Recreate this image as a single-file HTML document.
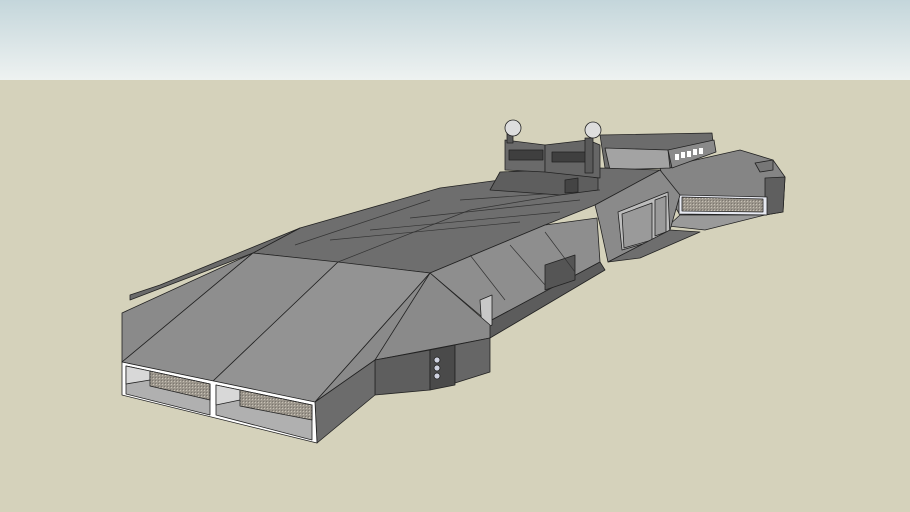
<!DOCTYPE html>
<html><head><meta charset="utf-8"><style>
html,body{margin:0;padding:0;width:910px;height:512px;overflow:hidden;background:#d5d2bb}
svg{display:block}
</style></head><body>
<svg width="910" height="512" viewBox="0 0 910 512" xmlns="http://www.w3.org/2000/svg">
<defs>
<linearGradient id="sky" x1="0" y1="0" x2="0" y2="1">
<stop offset="0" stop-color="#c4d6db"/><stop offset="1" stop-color="#eef2f1"/>
</linearGradient>
<pattern id="mesh" width="3" height="3" patternUnits="userSpaceOnUse">
<rect width="3" height="3" fill="#9c968c"/><rect width="1" height="1" fill="#c8c2b6"/><rect x="2" y="2" width="1" height="1" fill="#7c776f"/>
</pattern>
</defs>
<rect x="0" y="0" width="910" height="80" fill="url(#sky)"/>
<rect x="0" y="80" width="910" height="432" fill="#d5d2bb"/>
<g stroke="#222" stroke-width="0.8" stroke-linejoin="round">
<!-- rear wing -->
<polygon points="660,168 740,150 773,160 785,177 783,212 765,215 680,215 668,195" fill="#858585"/>
<polygon points="755,163 773,160 773,170 760,172" fill="#777"/>
<polygon points="765,178 785,177 783,212 765,215" fill="#5f5f5f"/>
<polygon points="679,195 767,197 767,215 679,214" fill="#e8eaf2"/>
<polygon points="682,197 763,199 763,212 682,211" fill="url(#mesh)"/>
<polygon points="680,215 765,215 705,230 668,226" fill="#9a9a9a"/>
<!-- rear deck -->
<polygon points="600,135 712,133 714,152 670,168 605,168" fill="#6c6c6c"/>
<polygon points="605,148 668,150 670,168 610,170" fill="#a3a3a3"/>
<polygon points="668,150 714,140 716,152 672,168" fill="#8a8a8a"/>
<g fill="#fff" stroke="none"><rect x="675" y="154" width="4" height="6"/><rect x="681" y="152" width="4" height="6"/><rect x="687" y="151" width="4" height="6"/><rect x="693" y="149" width="4" height="6"/><rect x="699" y="148" width="4" height="6"/></g>
<!-- main body top -->
<polygon points="253,253 430,273 545,225 595,205 660,170 600,168 500,180 440,188 300,228" fill="#6e6e6e"/>
<polygon points="130,300 253,253 300,228 160,285 130,295" fill="#6a6a6a"/>
<!-- body right side -->
<polygon points="430,273 488,322 600,262 597,218 545,225" fill="#8e8e8e"/>
<polygon points="488,322 490,338 605,270 600,262" fill="#5c5c5c"/>
<polygon points="595,205 660,170 680,195 670,230 608,262 600,225" fill="#8a8a8a"/>
<polygon points="618,212 668,192 670,236 622,250" fill="#bdbdbd"/>
<polygon points="622,214 652,203 652,240 624,248" fill="#9a9a9a"/>
<polygon points="655,200 666,196 666,232 655,236" fill="#9a9a9a"/>
<polygon points="608,262 670,230 700,232 640,258" fill="#6e6e6e"/>
<polygon points="545,265 575,255 575,280 545,290" fill="#555"/>
<polygon points="480,300 492,295 492,325 482,330" fill="#c8c8c8"/>
<!-- panel lines -->
<g fill="none" stroke="#333" stroke-width="0.7">
<polyline points="338,262 470,210 560,195"/>
<polyline points="295,245 430,200"/>
<polyline points="370,230 560,212"/>
<polyline points="330,240 520,222"/>
<polyline points="410,218 580,200"/>
<polyline points="460,200 600,190"/>
<line x1="470" y1="255" x2="505" y2="300"/>
<line x1="510" y1="245" x2="545" y2="285"/>
<line x1="545" y1="232" x2="575" y2="272"/>
</g>
<!-- superstructure -->
<polygon points="500,172 548,170 598,178 598,190 560,195 490,190" fill="#5e5e5e"/>
<polygon points="505,140 545,145 545,172 505,170" fill="#6a6a6a"/>
<polygon points="545,145 588,140 600,145 600,178 545,172" fill="#666"/>
<rect x="509" y="150" width="34" height="10" fill="#3f3f3f"/>
<rect x="552" y="152" width="34" height="10" fill="#3f3f3f"/>
<rect x="585" y="138" width="8" height="35" fill="#5a5a5a"/>
<rect x="507" y="133" width="6" height="10" fill="#5a5a5a"/>
<circle cx="513" cy="128" r="8" fill="#ddd"/>
<circle cx="593" cy="130" r="8" fill="#ddd"/>
<polygon points="565,180 578,178 578,192 565,193" fill="#444"/>
<!-- front block -->
<polygon points="122,313 253,253 122,362" fill="#8a8a8a"/>
<polygon points="253,253 338,262 212,382 122,362" fill="#8e8e8e"/>
<polygon points="338,262 430,273 315,402 212,382" fill="#939393"/>
<polygon points="430,273 490,325 490,338 375,360 315,402" fill="#8a8a8a"/>
<line x1="430" y1="273" x2="375" y2="360"/>
<polygon points="375,360 430,350 430,390 375,395" fill="#5e5e5e"/>
<polygon points="430,350 455,345 455,385 430,390" fill="#4a4a4a"/>
<polygon points="455,345 490,338 490,372 455,383" fill="#666"/>
<polygon points="315,402 375,360 375,395 317,443" fill="#6c6c6c"/>
<circle cx="437" cy="360" r="3" fill="#cfd2e0"/><circle cx="437" cy="368" r="3" fill="#cfd2e0"/><circle cx="437" cy="376" r="3" fill="#cfd2e0"/>
<!-- openings -->
<polygon points="122,362 315,402 317,443 122,395" fill="#fff"/>
<polygon points="126,366 210,384 210,415 126,394" fill="#b0b0b0"/>
<polygon points="126,366 150,371 150,380 126,384" fill="#d8d8d8"/>
<polygon points="150,371 210,384 210,400 150,386" fill="url(#mesh)"/>
<polygon points="216,385 312,405 312,440 216,415" fill="#b0b0b0"/>
<polygon points="216,385 240,390 240,400 216,405" fill="#d8d8d8"/>
<polygon points="240,390 312,405 312,420 240,406" fill="url(#mesh)"/>
</g>
</svg>
</body></html>
